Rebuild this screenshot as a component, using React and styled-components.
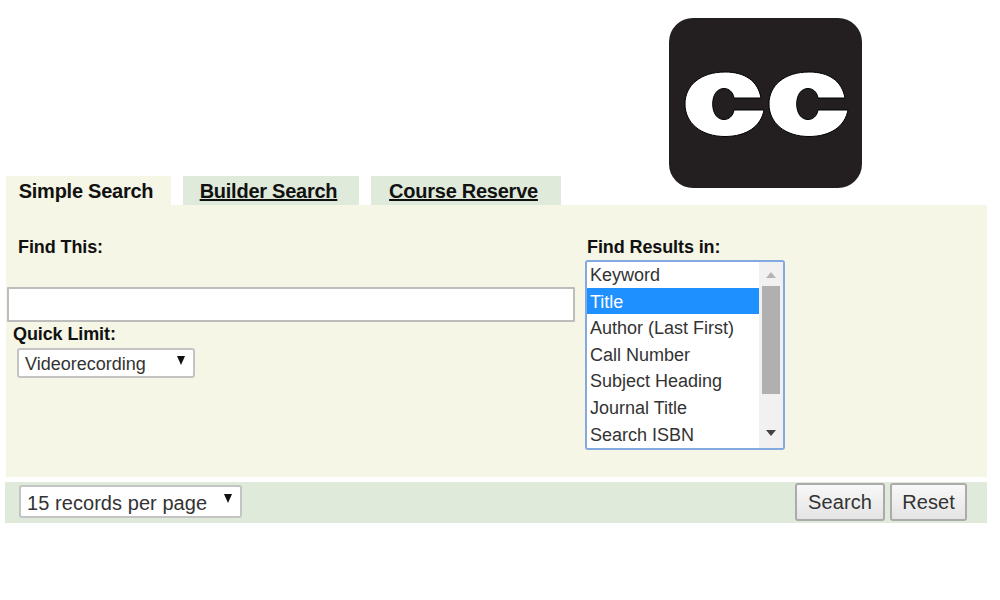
import React from "react";
import styled, { createGlobalStyle } from "styled-components";

const Global = createGlobalStyle`
  html, body { margin: 0; padding: 0; background: #fff; }
  body { font-family: "Liberation Sans", Arial, sans-serif; color: #111; overflow: hidden; }
`;
const Page = styled.div`width: 1000px; height: 600px; display: flex; flex-direction: column;`;
const Header = styled.header`height: 176px; padding-left: 669px; flex: none;`;
const Logo = styled.svg`display: block; width: 193px; height: 170px; margin-top: 18px;`;
const Tabs = styled.nav`display: flex; height: 29px; padding-left: 6px; gap: 12px; flex: none;`;
const Tab = styled.a`
  display: flex; align-items: center; justify-content: center;
  width: ${p => p.$w}px;
  background: ${p => (p.$active ? "#f5f6e6" : "#dfeadb")};
  font-size: 20px; font-weight: bold; letter-spacing: -0.25px; color: #111;
  text-decoration: ${p => (p.$active ? "none" : "underline")};
  padding: 1px 5px 0 0; box-sizing: border-box;
`;
const Panel = styled.section`
  margin-left: 6px; width: 981px; height: 272px; background: #f5f6e6; flex: none;
  display: grid; grid-template-columns: 579px 1fr;
`;
const Left = styled.div`display: flex; flex-direction: column; align-items: flex-start;`;
const Right = styled.div`display: flex; flex-direction: column; align-items: flex-start; padding-top: 32px;`;
const Label = styled.label`
  display: block; font-size: 18px; font-weight: bold; line-height: 21px; letter-spacing: -0.1px; color: #111;
  margin: ${p => p.$m || 0};
`;
const TextInput = styled.input`
  box-sizing: border-box; display: block; width: 568px; height: 35px; margin: 29px 0 0 1px; padding: 0;
  background: #fff; border: 2px solid #bdbdbd; border-radius: 1px; outline: none;
`;
const Dropdown = styled.div`
  box-sizing: border-box; display: flex; align-items: center; justify-content: space-between;
  width: ${p => p.$w}px; height: ${p => p.$h}px; margin: ${p => p.$m || 0};
  padding: ${p => p.$pt || 0}px 8px 0 ${p => p.$pl}px;
  background: #fff; border: 2px solid #c4c4c4; border-radius: 3px;
  font-size: ${p => p.$fs}px; letter-spacing: ${p => p.$ls || 0}px; color: #333;
`;
const Caret = styled.span`
  width: 0; height: 0; border-left: 4.5px solid transparent; border-right: 4.5px solid transparent;
  border-top: 9px solid #111; margin-bottom: ${p => p.$mb}px;
`;
const ListBox = styled.div`
  box-sizing: border-box; width: 200px; height: 190px; margin-top: 2px; display: flex;
  background: #fff; border: 2px solid #84a9e0; border-radius: 3px; overflow: hidden;
`;
const Options = styled.ul`list-style: none; margin: -1px 0 0 -1px; padding: 0; flex: 1;`;
const Option = styled.li`
  box-sizing: border-box; height: 26.6px; line-height: 26.6px; padding: 1px 0 0 4px; font-size: 18px;
  background: ${p => (p.$sel ? "#1e90ff" : "transparent")};
  color: ${p => (p.$sel ? "#fff" : "#333")};
`;
const Track = styled.div`
  width: 24px; background: #f1f1f1; display: flex; flex-direction: column; align-items: center; flex: none;
`;
const Arrow = styled.span`
  width: 0; height: 0; flex: none; margin: ${p => p.$m};
  border-left: 5px solid transparent; border-right: 5px solid transparent;
  ${p => (p.$up ? "border-bottom: 6px solid #b4b4b4;" : "border-top: 6px solid #444;")}
`;
const Thumb = styled.div`width: 18px; height: 108px; background: #b0b0b0; flex: none;`;
const Bar = styled.footer`
  box-sizing: border-box; margin: 5px 0 0 5px; width: 982px; height: 41px; background: #dfeadb; flex: none;
  display: flex; align-items: center; justify-content: space-between; padding: 0 20px 2px 14px;
`;
const Buttons = styled.div`display: flex; gap: 5px;`;
const Button = styled.button`
  box-sizing: border-box; width: ${p => p.$w}px; height: 38px; padding: 2px 0 0; margin: 0;
  font-family: inherit; font-size: 20px; color: #333; letter-spacing: 0.1px;
  background: linear-gradient(#f8f8f8, #e4e4e4); border: 2px solid #ababab; border-radius: 3px;
`;

const C_PATH = "M92 80H65C64 74 60 70.5 55 70.5C48 70.5 43.7 77 43.7 86C43.7 95 48 101.5 55 101.5C60 101.5 64 98 65 92H95C92 108 78 118.5 56 118.5C32 118.5 16 105 16 86C16 67 32 54 56 54C76 54 89 63 92 80Z";
const options = ["Keyword", "Title", "Author (Last First)", "Call Number", "Subject Heading", "Journal Title", "Search ISBN"];

export default function App() {
  return (
    <Page>
      <Global />
      <Header>
        <Logo viewBox="0 0 193 170" aria-label="Closed captions">
          <rect width="193" height="170" rx="24" fill="#231f20" />
          <path d={C_PATH} fill="#fff" stroke="#000" strokeWidth="1" />
          <path d={C_PATH} fill="#fff" stroke="#000" strokeWidth="1" transform="translate(84 0)" />
        </Logo>
      </Header>
      <Tabs>
        <Tab $w={165} $active>Simple Search</Tab>
        <Tab $w={176}>Builder Search</Tab>
        <Tab $w={190}>Course Reserve</Tab>
      </Tabs>
      <Panel>
        <Left>
          <Label $m="32px 0 0 12px">Find This:</Label>
          <TextInput type="text" />
          <Label $m="2px 0 0 7px">Quick Limit:</Label>
          <Dropdown $w={178} $h={30} $m="3px 0 0 11px" $fs={18} $pl={6} $pt={2}>
            Videorecording<Caret $mb={7} />
          </Dropdown>
        </Left>
        <Right>
          <Label $m="0 0 0 2px">Find Results in:</Label>
          <ListBox>
            <Options>
              {options.map(o => <Option key={o} $sel={o === "Title"}>{o}</Option>)}
            </Options>
            <Track>
              <Arrow $up $m="10px 0 8px" />
              <Thumb />
              <Arrow $m="36px 0 0" />
            </Track>
          </ListBox>
        </Right>
      </Panel>
      <Bar>
        <Dropdown $w={223} $h={33} $fs={20} $pl={6} $pt={3} $ls={0.06}>
          15 records per page<Caret $mb={9} />
        </Dropdown>
        <Buttons>
          <Button $w={90}>Search</Button>
          <Button $w={77}>Reset</Button>
        </Buttons>
      </Bar>
    </Page>
  );
}
